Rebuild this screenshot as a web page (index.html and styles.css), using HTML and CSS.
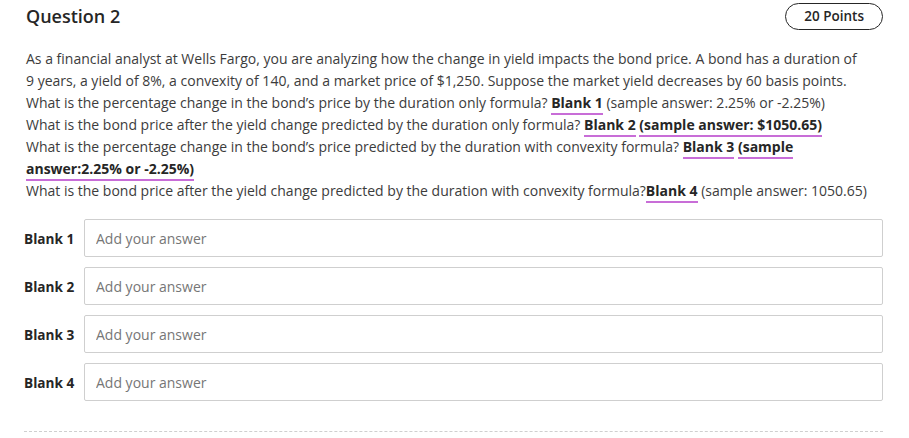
FILE: index.html
```html
<!DOCTYPE html>
<html>
<head>
<meta charset="utf-8">
<link rel="stylesheet" href="styles.css">
</head>
<body>
<div class="question">
  <div class="header">
    <h2 class="title">Question 2</h2>
    <span class="points">20 Points</span>
  </div>
  <p class="prompt">As a financial analyst at Wells Fargo, you are analyzing how the change in yield impacts the bond price. A bond has a duration of<br>9 years, a yield of 8%, a convexity of 140, and a market price of $1,250. Suppose the market yield decreases by 60 basis points.<br>What is the percentage change in the bond’s price by the duration only formula? <span class="blank">Blank 1</span> (sample answer: 2.25% or -2.25%)<br>What is the bond price after the yield change predicted by the duration only formula? <span class="blank">Blank 2</span> <span class="blank">(sample answer: $1050.65)</span><br>What is the percentage change in the bond’s price predicted by the duration with convexity formula? <span class="blank">Blank 3</span> <span class="blank">(sample </span><br><span class="blank">answer:2.25% or -2.25%)</span><br>What is the bond price after the yield change predicted by the duration with convexity formula?<span class="blank">Blank 4</span> (sample answer: 1050.65)</p>
  <div class="answers">
    <label class="row"><span class="label">Blank 1</span><input class="field" type="text" placeholder="Add your answer"></label>
    <label class="row"><span class="label">Blank 2</span><input class="field" type="text" placeholder="Add your answer"></label>
    <label class="row"><span class="label">Blank 3</span><input class="field" type="text" placeholder="Add your answer"></label>
    <label class="row"><span class="label">Blank 4</span><input class="field" type="text" placeholder="Add your answer"></label>
  </div>
  <div class="divider"></div>
</div>
</body>
</html>
```
FILE: styles.css
```css
html, body {
  margin: 0;
  padding: 0;
  background: #fff;
}
body {
  font-family: "Open Sans", "Liberation Sans", sans-serif;
  color: #333;
}
.question {
  padding: 2px 26px 0 24px;
}
.header {
  display: flex;
  justify-content: space-between;
  align-items: center;
  height: 28px;
  padding-left: 2px;
}
.title {
  margin: 0;
  font-size: 18px;
  font-weight: 600;
  color: #262626;
}
.points {
  font-size: 13.5px;
  font-weight: 600;
  color: #262626;
  border: 1px solid #262626;
  border-radius: 14px;
  padding: 3px 18px 4px;
  line-height: 18px;
}
.prompt {
  margin: 18px 6px 0 2px;
  font-size: 14px;
  line-height: 22px;
  color: #3c3c3c;
}
.blank {
  font-weight: 700;
  color: #262626;
  border-bottom: 2px solid #c86dd7;
  padding-bottom: 1px;
}
.answers {
  display: flex;
  flex-direction: column;
  gap: 10px;
  margin-top: 17px;
}
.row {
  display: flex;
  align-items: center;
}
.label {
  width: 60px;
  font-size: 13.6px;
  font-weight: 700;
  color: #262626;
}
.field {
  flex: 1;
  height: 38px;
  box-sizing: border-box;
  border: 1px solid #cfcfcf;
  border-radius: 2px;
  padding: 0 11px;
  font-family: "Open Sans", "Liberation Sans", sans-serif;
  font-size: 14px;
  color: #333;
  outline: none;
}
.field::placeholder {
  color: #767676;
}
.divider {
  margin-top: 30px;
  border-top: 1px dashed #cfcfcf;
}
```
